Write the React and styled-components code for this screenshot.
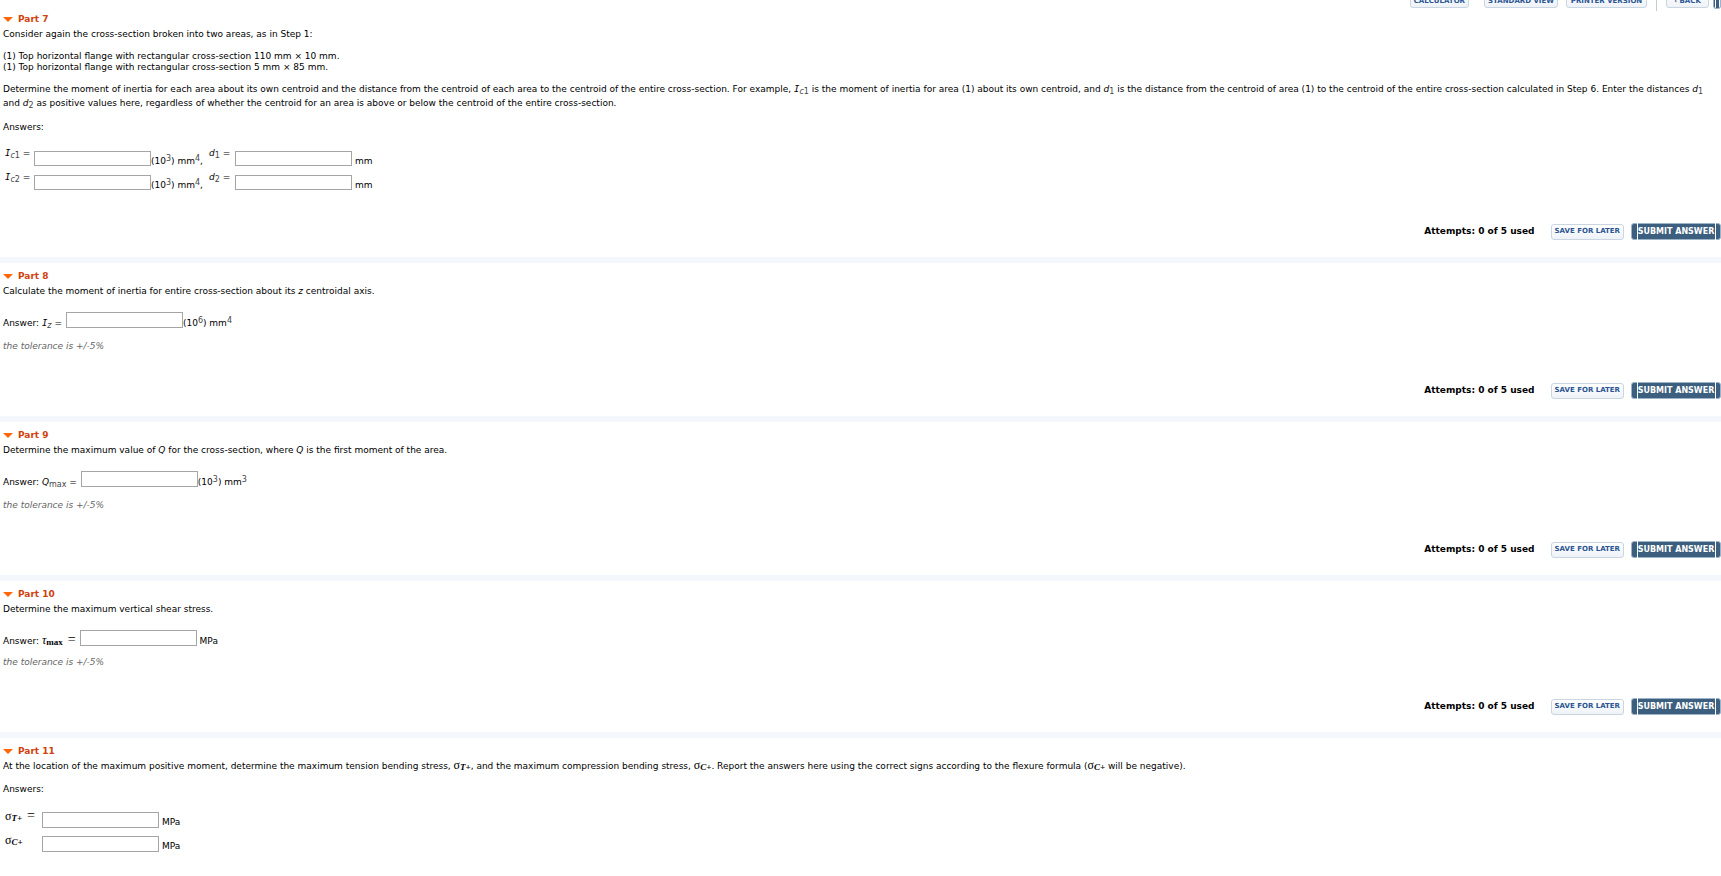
import React from 'react';
import styled, { createGlobalStyle } from 'styled-components';

const GlobalStyle = createGlobalStyle`
  * {
    box-sizing: border-box;
  }

  body {
    margin: 0;
    background: #fff;
    color: #000;
    font-family: "DejaVu Sans", Verdana, sans-serif;
    font-size: 9px;
    line-height: 13px;
  }
`;

const Page = styled.div`
  width: 100%;
  height: 100vh;
  overflow: hidden;
`;

const Toolbar = styled.header`
  display: flex;
  justify-content: flex-end;
  align-items: flex-start;
  gap: 8px;
  height: 14px;
  margin-top: -8px;
`;

const ToolGroup = styled.div`
  display: flex;
  gap: ${(props) => props.$gap}px;
`;

const Divider = styled.div`
  width: 1px;
  height: 19px;
  margin: 0 1px;
  background: #c3cdd6;
`;

const LightButton = styled.button`
  height: 16px;
  min-width: ${(props) => props.$width}px;
  padding: 0 3px;
  border: 1px solid #c9d5e0;
  border-radius: 3px;
  background: linear-gradient(#fff, #eef2f7);
  color: #2a5591;
  font-family: inherit;
  font-size: 7px;
  font-weight: bold;
  line-height: 13px;
  text-transform: uppercase;
  white-space: nowrap;
`;

const ToolButton = styled(LightButton)`
  padding-top: 2px;
`;

const DarkButton = styled(LightButton)`
  position: relative;
  height: 17px;
  padding: 0;
  border: 1px solid #9db4c8;
  background: #3d5f7f;
  color: #fff;
  font-size: 8px;

  &::before,
  &::after {
    content: '';
    position: absolute;
    top: -1px;
    bottom: -1px;
    width: 1px;
    background: #fff;
  }

  &::before {
    left: 5px;
  }

  &::after {
    right: 4px;
  }
`;

const NextButton = styled(DarkButton)`
  overflow: hidden;
`;

const Section = styled.section`
  padding: 6px 0 0 3px;
`;

const Band = styled.hr`
  height: 6px;
  margin: 0;
  border: 0;
  background: #f4f8fc;
`;

const Title = styled.h2`
  display: flex;
  align-items: center;
  gap: 5px;
  margin: 0;
  color: #d1410c;
  font-size: 9px;
  line-height: 15px;
`;

const Text = styled.p`
  margin: 0 0 ${(props) => props.$space || 0}px;
  padding-right: 4px;
  line-height: ${(props) => props.$line || 14}px;
`;

const Sub = styled.sub`
  color: #444;
  font-size: 8px;
  line-height: 0;
  vertical-align: -2px;
`;

const Sup = styled.sup`
  color: #444;
  font-size: 8px;
  line-height: 0;
  vertical-align: 3px;
`;

// the sans capital I has no bars, the mono one does
const BarredI = styled.i`
  font-family: "DejaVu Sans Mono", monospace;
  line-height: 0;
`;

const MathText = styled.span`
  font-family: "Liberation Serif", serif;
  font-size: 12px;
  line-height: 0;

  sub {
    color: #000;
    font-size: 9px;
    font-style: ${(props) => (props.$upright ? 'normal' : 'italic')};
    font-weight: bold;
    line-height: 0;
    vertical-align: -1px;
  }
`;

const Equals = styled.span`
  padding-left: 5px;
  font-family: "Liberation Serif", serif;
  font-size: 14px;
  line-height: 0;
`;

const AnswerRow = styled.div`
  display: flex;
  align-items: center;
  height: 16px;
  margin-bottom: ${(props) => props.$space || 12}px;
`;

const AnswerLabel = styled.label`
  padding: 6px 4px 0 0;
  white-space: pre;
`;

const Unit = styled.span`
  padding: 6px 0 0 ${(props) => props.$space || 0}px;
  white-space: nowrap;
`;

const Field = styled.input`
  width: 117px;
  height: ${(props) => props.$height || 16}px;
  padding: 1px 2px;
  border: 1px solid #a5a5a5;
  border-radius: 0;
  background: #fff;
  font: inherit;
`;

const AnswerGrid = styled.div`
  display: grid;
  grid-template-columns: ${(props) => props.$columns};
  grid-auto-rows: 24px;
  align-items: start;
`;

const GridLabel = styled.label`
  padding-left: 2px;
  margin-top: ${(props) => (props.$low ? -1 : -4)}px;
  white-space: nowrap;
`;

const GridUnit = styled.span`
  padding: 4px 0 0 ${(props) => props.$space || 0}px;
  white-space: nowrap;
`;

const Tolerance = styled.em`
  display: block;
  color: #666;
`;

const Actions = styled.div`
  display: flex;
  justify-content: flex-end;
  align-items: center;
  height: 17px;
  margin: ${(props) => props.$top}px 0 17px;
`;

const Attempts = styled.strong`
  margin-right: 16px;
`;

const SaveButton = styled(LightButton)`
  margin-right: 7px;
`;

const PartTitle = ({ number }) => (
  <Title>
    <svg width="10" height="5" viewBox="0 0 10 5" aria-hidden="true">
      <path d="M0 0h10L5 5z" fill="#ff6608" />
    </svg>
    Part {number}
  </Title>
);

const PartActions = ({ top }) => (
  <Actions $top={top}>
    <Attempts>Attempts: 0 of 5 used</Attempts>
    <SaveButton $width={73}>Save for later</SaveButton>
    <DarkButton $width={90}>Submit answer</DarkButton>
  </Actions>
);

const SigmaT = () => <MathText>σ<sub>T+</sub></MathText>;
const SigmaC = () => <MathText>σ<sub>C+</sub></MathText>;

const inertiaRows = [1, 2];

const App = () => {
  return (
    <Page>
      <GlobalStyle />
      <Toolbar>
        <ToolGroup $gap={15}>
          <ToolButton $width={59}>Calculator</ToolButton>
          <ToolGroup $gap={8}>
            <ToolButton $width={74}>Standard view</ToolButton>
            <ToolButton $width={81}>Printer version</ToolButton>
          </ToolGroup>
        </ToolGroup>
        <Divider />
        <ToolGroup $gap={4}>
          <ToolButton $width={43}>‹ Back</ToolButton>
          <NextButton $width={8} aria-label="Next" />
        </ToolGroup>
      </Toolbar>

      <Section>
        <PartTitle number={7} />
        <Text $space={10}>Consider again the cross-section broken into two areas, as in Step 1:</Text>
        <Text $space={9} $line={11}>
          (1) Top horizontal flange with rectangular cross-section 110 mm × 10 mm.<br />
          (1) Top horizontal flange with rectangular cross-section 5 mm × 85 mm.
        </Text>
        <Text $space={10}>
          Determine the moment of inertia for each area about its own centroid and the distance from the
          centroid of each area to the centroid of the entire cross-section. For
          example, <BarredI>I</BarredI><Sub><i>c</i>1</Sub> is
          the moment of inertia for area (1) about its own centroid, and <i>d</i><Sub>1</Sub> is the distance
          from the centroid of area (1) to the centroid of the entire cross-section calculated in Step 6. Enter
          the distances <i>d</i><Sub>1</Sub> and <i>d</i><Sub>2</Sub> as positive values here, regardless of
          whether the centroid for an area is above or below the centroid of the entire cross-section.
        </Text>
        <Text $space={17}>Answers:</Text>
        <AnswerGrid $columns="31px 117px 56px 28px 117px auto">
          {inertiaRows.map((n) => (
            <React.Fragment key={n}>
              <GridLabel htmlFor={`inertia${n}`}><BarredI>I</BarredI><Sub><i>c</i>{n}</Sub> =</GridLabel>
              <Field id={`inertia${n}`} $height={15} />
              <GridUnit>(10<Sup>3</Sup>) mm<Sup>4</Sup>,</GridUnit>
              <GridLabel htmlFor={`distance${n}`}><i>d</i><Sub>{n}</Sub> =</GridLabel>
              <Field id={`distance${n}`} $height={15} />
              <GridUnit $space={3}>mm</GridUnit>
            </React.Fragment>
          ))}
        </AnswerGrid>
        <PartActions top={24} />
      </Section>
      <Band />

      <Section>
        <PartTitle number={8} />
        <Text $space={14}>
          Calculate the moment of inertia for entire cross-section about its <i>z</i> centroidal axis.
        </Text>
        <AnswerRow>
          <AnswerLabel htmlFor="iz">Answer: <BarredI>I</BarredI><Sub><i>z</i></Sub> =</AnswerLabel>
          <Field id="iz" />
          <Unit>(10<Sup>6</Sup>) mm<Sup>4</Sup></Unit>
        </AnswerRow>
        <Tolerance>the tolerance is +/-5%</Tolerance>
        <PartActions top={29} />
      </Section>
      <Band />

      <Section>
        <PartTitle number={9} />
        <Text $space={14}>
          Determine the maximum value of <i>Q</i> for the cross-section, where <i>Q</i> is the first moment of the area.
        </Text>
        <AnswerRow>
          <AnswerLabel htmlFor="qmax">Answer: <i>Q</i><Sub>max</Sub> =</AnswerLabel>
          <Field id="qmax" />
          <Unit>(10<Sup>3</Sup>) mm<Sup>3</Sup></Unit>
        </AnswerRow>
        <Tolerance>the tolerance is +/-5%</Tolerance>
        <PartActions top={29} />
      </Section>
      <Band />

      <Section>
        <PartTitle number={10} />
        <Text $space={14}>Determine the maximum vertical shear stress.</Text>
        <AnswerRow $space={10}>
          <AnswerLabel htmlFor="tau">Answer: <MathText $upright><i>τ</i><sub>max</sub></MathText><Equals>=</Equals></AnswerLabel>
          <Field id="tau" />
          <Unit $space={3}>MPa</Unit>
        </AnswerRow>
        <Tolerance>the tolerance is +/-5%</Tolerance>
        <PartActions top={29} />
      </Section>
      <Band />

      <Section>
        <PartTitle number={11} />
        <Text $space={9}>
          At the location of the maximum positive moment, determine the maximum tension bending stress, <SigmaT />,
          and the maximum compression bending stress, <SigmaC />. Report the answers here using the correct signs
          according to the flexure formula (<SigmaC /> will be negative).
        </Text>
        <Text $space={16}>Answers:</Text>
        <AnswerGrid $columns="39px 117px auto">
          <GridLabel $low htmlFor="tension"><SigmaT /><Equals>=</Equals></GridLabel>
          <Field id="tension" />
          <GridUnit $space={3}>MPa</GridUnit>
          <GridLabel $low htmlFor="compression"><SigmaC /></GridLabel>
          <Field id="compression" />
          <GridUnit $space={3}>MPa</GridUnit>
        </AnswerGrid>
      </Section>
    </Page>
  );
};

export default App;
